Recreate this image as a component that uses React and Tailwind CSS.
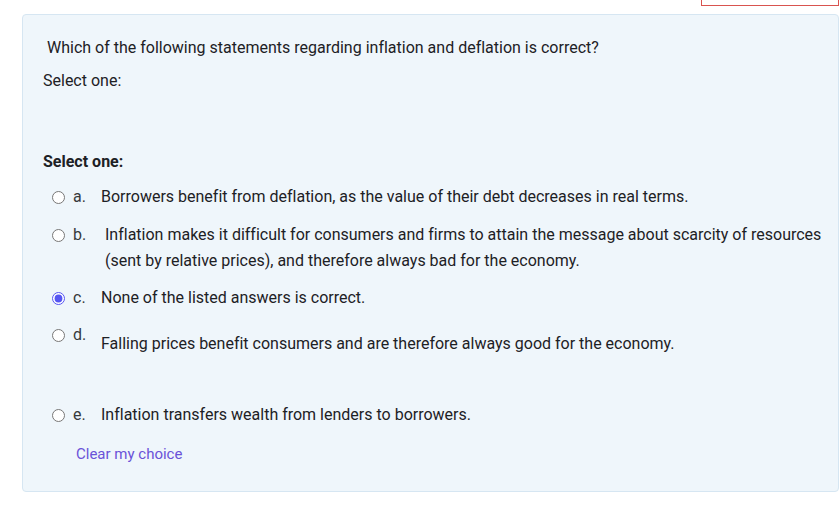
import React from "react";

const options = [
  {
    key: "a",
    text: "Borrowers benefit from deflation, as the value of their debt decreases in real terms.",
    mt: "mt-[11px]",
  },
  {
    key: "b",
    text: "Inflation makes it difficult for consumers and firms to attain the message about scarcity of resources (sent by relative prices), and therefore always bad for the economy.",
    mt: "mt-[12px]",
    indent: true,
  },
  { key: "c", text: "None of the listed answers is correct.", mt: "mt-[11px]", checked: true },
  {
    key: "d",
    text: "Falling prices benefit consumers and are therefore always good for the economy.",
    mt: "mt-[20px]",
    raised: true,
  },
  { key: "e", text: "Inflation transfers wealth from lenders to borrowers.", mt: "mt-[45px]" },
];

const Option = ({ opt }) => (
  <div className={`flex items-start pl-[29px] ${opt.mt}`}>
    <input
      type="radio"
      name="answer"
      readOnly
      checked={!!opt.checked}
      className={`m-0 w-[13px] h-[13px] shrink-0 accent-[#5555f2] ${
        opt.raised ? "mt-[-2px]" : "mt-[7px]"
      }`}
    />
    <span
      className={`w-[28px] shrink-0 ml-[8px] text-[#373a3c] leading-[26px] ${
        opt.raised ? "-mt-[9px]" : ""
      }`}
    >
      {opt.key}.
    </span>
    <span className={`leading-[26px] pr-4 ${opt.indent ? "pl-[4px]" : ""}`}>{opt.text}</span>
  </div>
);

const App = () => {
  return (
    <div
      className="w-[840px] h-[515px] bg-white text-[16px] text-[#1d2125] overflow-hidden"
      style={{ fontFamily: "Roboto, 'Liberation Sans', sans-serif", fontVariantLigatures: "none" }}
    >
      <div className="flex justify-end">
        <div className="w-[138px] h-[6px] border border-t-0 border-[#d9534f] mr-px" />
      </div>
      <div className="ml-[22px] mr-px mt-[8px] h-[478px] rounded-[4px] border border-[#d6e6f2] bg-[#eff6fb] pt-[22px]">
        <p className="ml-[24px] leading-[22px]">
          Which of the following statements regarding inflation and deflation is correct?
        </p>
        <p className="ml-[20px] mt-[11px] leading-[22px]">Select one:</p>
        <p className="ml-[20px] mt-[59px] leading-[22px] font-bold">Select one:</p>
        {options.map((opt) => (
          <Option key={opt.key} opt={opt} />
        ))}
        <p className="ml-[53px] mt-[15px] leading-[22px] text-[15px] text-[#6a52d8]">
          Clear my choice
        </p>
      </div>
    </div>
  );
};

export default App;
